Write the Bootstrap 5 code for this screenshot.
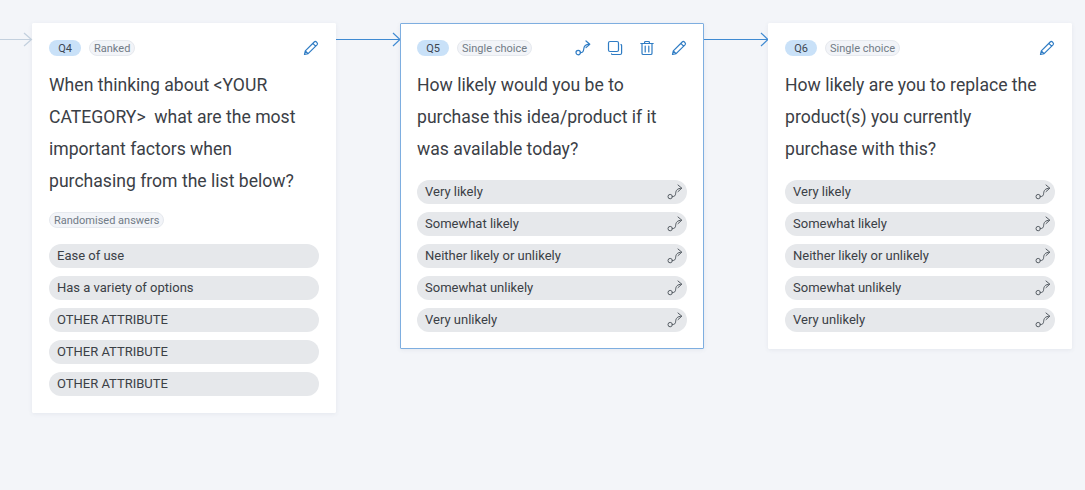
<!DOCTYPE html>
<html lang="en">
<head>
<meta charset="utf-8">
<title>Survey flow</title>
<link href="https://cdn.jsdelivr.net/npm/bootstrap@5.3.0/dist/css/bootstrap.min.css" rel="stylesheet">
<style>
html, body { height: 100%; }
body { background: #f3f5f9; font-family: Roboto, "Liberation Sans", sans-serif; color: #30353a; overflow: hidden; }
.flow-canvas { position: relative; padding: 23px 13px 0 32px; gap: 64px; height: 490px; }
.q-card { width: 304px; background: #fff; padding: 16px; border: 1px solid #fff; box-shadow: 0 1px 4px rgba(60,80,110,.08); border-radius: 1px; }
.q-card.is-active { border-color: #7eaee0; }
.q-head { height: 16px; margin-bottom: 12px; }
.q-num { background: #c9e1f8; color: #3c4650; font-size: 11px; line-height: 17px; height: 16px; width: 32px; text-align: center; border-radius: 8px; }
.q-type { background: #f2f4f8; border: 1px solid #e6e9ee; color: #717b86; font-size: 11px; line-height: 15px; height: 16px; padding: 0 4px; border-radius: 8px; }
.q-text { font-size: 17.6px; line-height: 32px; padding-top: 1px; margin: 0 0 -1px; white-space: pre-wrap; color: #3b4046; }
.q-tag { margin: 16px 0; width: max-content; }
.q-answers { margin-top: 16px; gap: 8px; }
.q-answer { height: 24px; background: #e6e8eb; border-radius: 12px; padding: 0 8px; font-size: 13px; line-height: 24px; color: #3b4046; }
.q-icon { display: block; width: 16px; height: 16px; fill: none; stroke: #2f7cc4; stroke-width: 1.2; stroke-linecap: round; stroke-linejoin: round; }
.q-answer .q-icon { stroke: #555c63; stroke-width: 1; margin-right: -4px; }
.q-tools { gap: 16px; }
.q-link { position: absolute; top: 32px; width: 64px; height: 16px; fill: none; stroke: #3f8ad2; stroke-width: 1.2; }
.q-link.is-faded { stroke: #c3d0de; left: 0; width: 33px; }
.q-link-a { left: 336px; }
.q-link-b { left: 704px; }
</style>
</head>
<body>
<svg width="0" height="0" class="d-block position-absolute">
  <defs>
    <symbol id="i-pencil" viewBox="0 0 16 16"><path d="M1.500 14.500l.8-3.600L11.200 2a1.600 1.600 0 0 1 2.200 0l.6.600a1.600 1.600 0 0 1 0 2.200l-8.900 8.900zM2.300 10.900l2.800 2.800M9.800 3.400l2.800 2.800"/></symbol>
    <symbol id="i-branch" viewBox="0 0 16 16"><circle cx="3.200" cy="12.600" r="2.200"/><path d="M5.400 12.600c2.300 0 3.100-1 3.300-3.400.2-2.900 1.500-4.800 5.800-5M11 1l3.800 3.200L11 7.600"/></symbol>
    <symbol id="i-copy" viewBox="0 0 16 16"><rect x="1.500" y="1.500" width="10" height="10" rx="1.500"/><path d="M14 4.600c.4.200.6.600.6 1v7.400a1.500 1.500 0 0 1-1.500 1.500H5.600c-.4 0-.8-.2-1-.6"/></symbol>
    <symbol id="i-trash" viewBox="0 0 16 16"><path d="M1.800 3.500h12.400M5.600 3.500V2.300c0-.5.4-.8.8-.8h3.200c.4 0 .8.300.8.800v1.200M3 3.500v9.700c0 .7.600 1.300 1.300 1.300h7.400c.7 0 1.300-.6 1.300-1.300V3.500M6.200 6.200v5.800M9.800 6.200v5.800"/></symbol>
  </defs>
</svg>

<main class="flow-canvas d-flex align-items-start">
  <svg class="q-link is-faded" viewBox="0 0 33 16"><path d="M0 7.500h32M24 1l7.500 6.500L24 14"/></svg>
  <svg class="q-link q-link-a" viewBox="0 0 64 16"><path d="M0 7.500h64M57 1l7 6.500-7 6.500"/></svg>
  <svg class="q-link q-link-b" viewBox="0 0 64 16"><path d="M0 7.500h64M57 1l7 6.500-7 6.500"/></svg>

  <section class="q-card flex-shrink-0">
    <div class="q-head d-flex align-items-center justify-content-between">
      <div class="d-flex align-items-center gap-2"><span class="q-num">Q4</span><span class="q-type">Ranked</span></div>
      <svg class="q-icon"><use href="#i-pencil"/></svg>
    </div>
    <p class="q-text">When thinking about &lt;YOUR CATEGORY&gt;  what are the most important factors when purchasing from the list below?</p>
    <div class="q-type q-tag">Randomised answers</div>
    <div class="q-answers d-flex flex-column">
      <div class="q-answer">Ease of use</div>
      <div class="q-answer">Has a variety of options</div>
      <div class="q-answer">OTHER ATTRIBUTE</div>
      <div class="q-answer">OTHER ATTRIBUTE</div>
      <div class="q-answer">OTHER ATTRIBUTE</div>
    </div>
  </section>

  <section class="q-card is-active flex-shrink-0">
    <div class="q-head d-flex align-items-center justify-content-between">
      <div class="d-flex align-items-center gap-2"><span class="q-num">Q5</span><span class="q-type">Single choice</span></div>
      <div class="q-tools d-flex">
        <svg class="q-icon"><use href="#i-branch"/></svg>
        <svg class="q-icon"><use href="#i-copy"/></svg>
        <svg class="q-icon"><use href="#i-trash"/></svg>
        <svg class="q-icon"><use href="#i-pencil"/></svg>
      </div>
    </div>
    <p class="q-text">How likely would you be to purchase this idea/product if it was available today?</p>
    <div class="q-answers d-flex flex-column">
      <div class="q-answer d-flex align-items-center justify-content-between">Very likely<svg class="q-icon"><use href="#i-branch"/></svg></div>
      <div class="q-answer d-flex align-items-center justify-content-between">Somewhat likely<svg class="q-icon"><use href="#i-branch"/></svg></div>
      <div class="q-answer d-flex align-items-center justify-content-between">Neither likely or unlikely<svg class="q-icon"><use href="#i-branch"/></svg></div>
      <div class="q-answer d-flex align-items-center justify-content-between">Somewhat unlikely<svg class="q-icon"><use href="#i-branch"/></svg></div>
      <div class="q-answer d-flex align-items-center justify-content-between">Very unlikely<svg class="q-icon"><use href="#i-branch"/></svg></div>
    </div>
  </section>

  <section class="q-card flex-shrink-0">
    <div class="q-head d-flex align-items-center justify-content-between">
      <div class="d-flex align-items-center gap-2"><span class="q-num">Q6</span><span class="q-type">Single choice</span></div>
      <svg class="q-icon"><use href="#i-pencil"/></svg>
    </div>
    <p class="q-text">How likely are you to replace the product(s) you currently<br>purchase with this?</p>
    <div class="q-answers d-flex flex-column">
      <div class="q-answer d-flex align-items-center justify-content-between">Very likely<svg class="q-icon"><use href="#i-branch"/></svg></div>
      <div class="q-answer d-flex align-items-center justify-content-between">Somewhat likely<svg class="q-icon"><use href="#i-branch"/></svg></div>
      <div class="q-answer d-flex align-items-center justify-content-between">Neither likely or unlikely<svg class="q-icon"><use href="#i-branch"/></svg></div>
      <div class="q-answer d-flex align-items-center justify-content-between">Somewhat unlikely<svg class="q-icon"><use href="#i-branch"/></svg></div>
      <div class="q-answer d-flex align-items-center justify-content-between">Very unlikely<svg class="q-icon"><use href="#i-branch"/></svg></div>
    </div>
  </section>
</main>
<script src="https://cdn.jsdelivr.net/npm/bootstrap@5.3.0/dist/js/bootstrap.bundle.min.js"></script>
</body>
</html>
